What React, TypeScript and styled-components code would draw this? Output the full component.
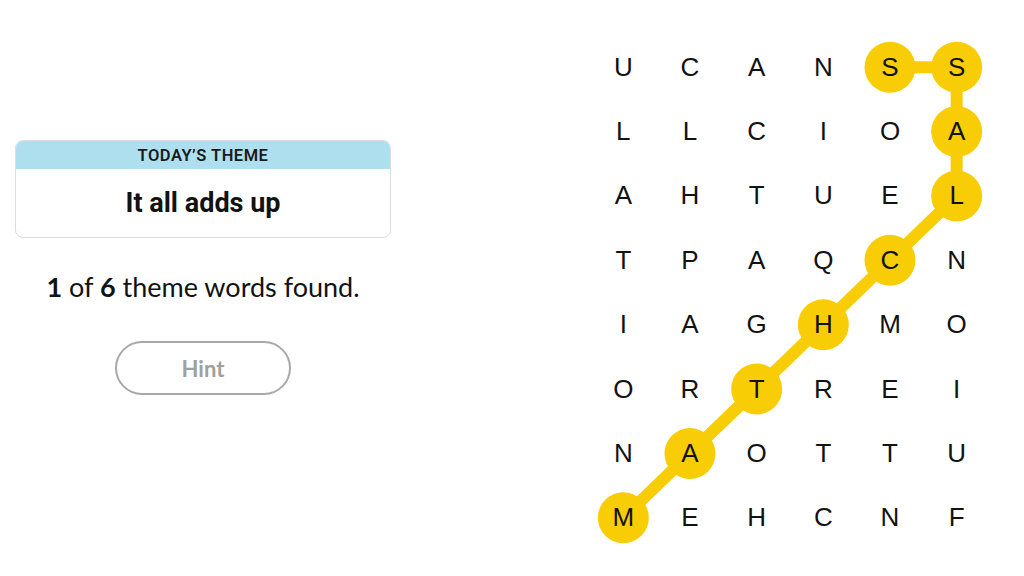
import React from "react";
import styled, { createGlobalStyle } from "styled-components";

const GlobalStyle = createGlobalStyle`
	html, body {
		margin: 0;
		padding: 0;
		background: #ffffff;
		font-family: "Liberation Sans", Arial, sans-serif;
	}
`;

const Page = styled.div`
	display: flex;
	width: 1024px;
	height: 576px;
	overflow: hidden;
`;

const SidePanel = styled.div`
	width: 376px;
	margin-left: 15px;
	padding-top: 140px;
	display: flex;
	flex-direction: column;
	align-items: center;
`;

const ThemeCard = styled.div`
	width: 100%;
	border: 1px solid #dcdcdc;
	border-radius: 8px;
	overflow: hidden;
	box-sizing: border-box;
`;

const ThemeHeader = styled.div`
	background: #aedfee;
	height: 28px;
	display: flex;
	align-items: center;
	justify-content: center;
	font-family: "Roboto", sans-serif;
	font-weight: 600;
	font-size: 16.5px;
	letter-spacing: 0.5px;
	color: #1a1a1a;
`;

const ThemeTitle = styled.div`
	height: 68px;
	display: flex;
	align-items: center;
	justify-content: center;
	font-family: "Roboto", sans-serif;
	font-weight: 700;
	font-size: 27px;
	color: #121212;
	padding-bottom: 1px;
	box-sizing: border-box;
`;

const Progress = styled.p`
	margin: 33px 0 0;
	font-family: "Lato", sans-serif;
	font-size: 27px;
	line-height: 32px;
	color: #121212;

	b {
		font-weight: 700;
	}
`;

const HintButton = styled.button`
	margin-top: 38px;
	width: 176px;
	height: 54px;
	border: 2px solid #a8a8a8;
	border-radius: 27px;
	background: #ffffff;
	font-family: "Lato", sans-serif;
	font-weight: 700;
	font-size: 22px;
	color: #a0a0a0;
	cursor: pointer;
`;

const Board = styled.div`
	position: relative;
	margin-left: 199px;
	margin-top: 35px;
	width: 400px;
	height: 515px;
`;

const Trail = styled.svg`
	position: absolute;
	inset: 0;
	pointer-events: none;
`;

const Grid = styled.div`
	position: relative;
	display: grid;
	grid-template-columns: repeat(6, 1fr);
	grid-template-rows: repeat(8, 1fr);
	width: 100%;
	height: 100%;
`;

const Cell = styled.div`
	display: flex;
	align-items: center;
	justify-content: center;
	font-family: "Liberation Sans", Arial, sans-serif;
	font-size: 26px;
	color: #121212;
`;

const letters = [
	"UCANSS",
	"LLCIOA",
	"AHTUEL",
	"TPAQCN",
	"IAGHMO",
	"ORTREI",
	"NAOTTU",
	"MEHCNF",
];

const CELL_W = 400 / 6;
const CELL_H = 515 / 8;

// MATHCLASS, as [col, row]
const path: [number, number][] = [
	[0, 7],
	[1, 6],
	[2, 5],
	[3, 4],
	[4, 3],
	[5, 2],
	[5, 1],
	[5, 0],
	[4, 0],
];

const center = ([c, r]: [number, number]) => ({
	x: c * CELL_W + CELL_W / 2,
	y: r * CELL_H + CELL_H / 2,
});

const App: React.FC = (): React.ReactElement => {
	const points = path.map(center);
	return (
		<Page>
			<GlobalStyle />
			<SidePanel>
				<ThemeCard>
					<ThemeHeader>TODAY’S THEME</ThemeHeader>
					<ThemeTitle>It all adds up</ThemeTitle>
				</ThemeCard>
				<Progress>
					<b>1</b> of <b>6</b> theme words found.
				</Progress>
				<HintButton>Hint</HintButton>
			</SidePanel>
			<Board>
				<Trail width="400" height="515" viewBox="0 0 400 515">
					<polyline
						points={points.map((p) => `${p.x},${p.y}`).join(" ")}
						fill="none"
						stroke="#f8cd05"
						strokeWidth="12"
						strokeLinejoin="round"
					/>
					{points.map((p, i) => (
						<circle key={i} cx={p.x} cy={p.y} r="25.5" fill="#f8cd05" />
					))}
				</Trail>
				<Grid>
					{letters.map((row, r) =>
						row.split("").map((ch, c) => <Cell key={`${r}-${c}`}>{ch}</Cell>)
					)}
				</Grid>
			</Board>
		</Page>
	);
};

export default App;
